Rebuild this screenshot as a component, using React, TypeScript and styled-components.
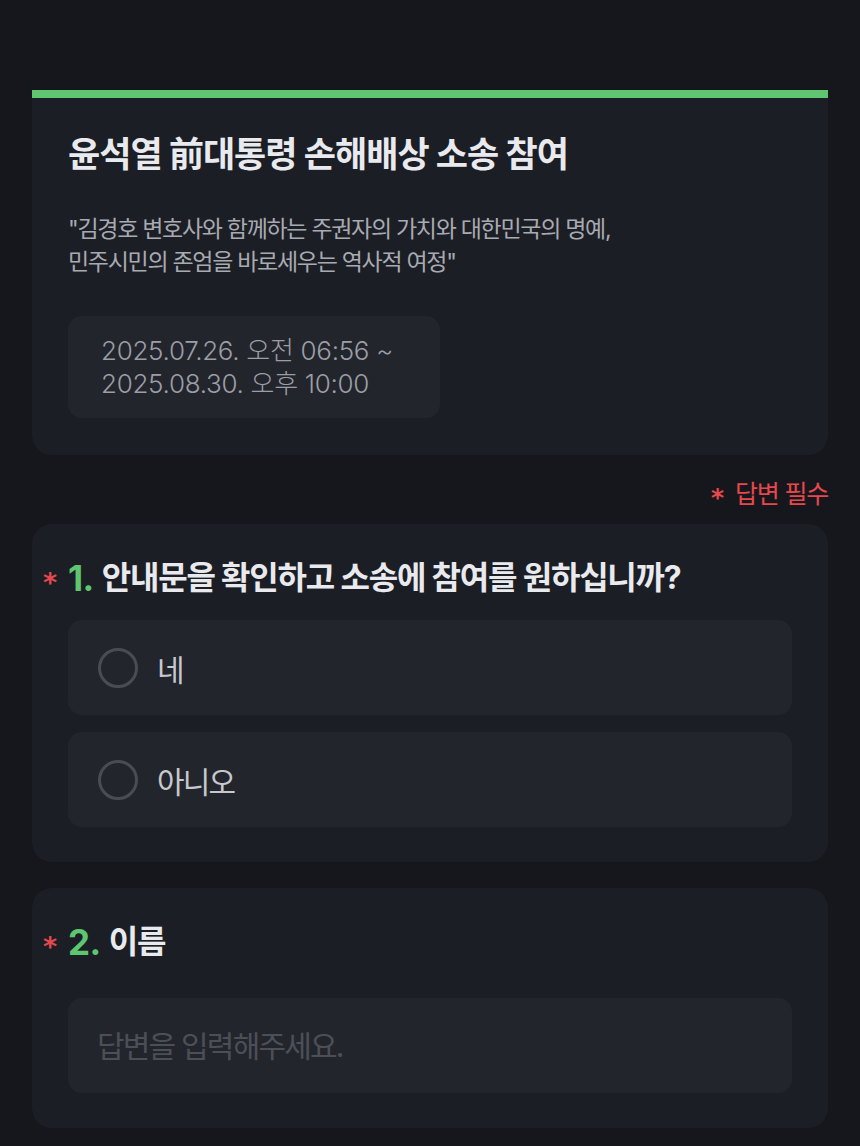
import React from "react";
import styled, { createGlobalStyle } from "styled-components";

const Global = createGlobalStyle`
  html, body { margin: 0; padding: 0; background: #16171c; }
  body { font-family: "Inter", "Noto Sans CJK KR", sans-serif; }
  * { box-sizing: border-box; }
`;

const Page = styled.div`
  min-height: 1146px;
  background: #16171c;
  padding: 90px 32px 40px;
  display: flex;
  flex-direction: column;
`;

const HeaderCard = styled.section`
  background: #1c1e25;
  border-top: 8px solid #5ec671;
  border-radius: 0 0 20px 20px;
  padding: 35px 36px 37px;
  display: flex;
  flex-direction: column;
  align-items: flex-start;
`;

const Title = styled.h1`
  margin: 0;
  font-size: 35px;
  line-height: 42px;
  font-weight: 700;
  letter-spacing: -1px;
  color: #e9eaee;
`;

const Description = styled.p`
  margin: 38px 0 0;
  font-size: 23px;
  line-height: 33px;
  letter-spacing: -1.3px;
  color: #a8aab1;
`;

const DateBox = styled.div`
  margin-top: 37px;
  background: #23252d;
  border-radius: 14px;
  padding: 18px 47px 18px 33px;
  font-size: 26px;
  line-height: 33px;
  font-weight: 300;
  letter-spacing: -0.3px;
  color: #9c9ea5;
`;

const RequiredNote = styled.div`
  margin: 23px 0 14px;
  display: flex;
  justify-content: flex-end;
  align-items: center;
  gap: 11px;
  font-size: 25px;
  line-height: 32px;
  letter-spacing: -1.2px;
  color: #e5484d;
`;

const Star = styled.span<{ $size: number; $drop: number }>`
  color: #e5484d;
  font-family: "DejaVu Sans", sans-serif;
  font-weight: 700;
  font-size: ${(p) => p.$size}px;
  line-height: 1;
  padding-top: ${(p) => p.$drop}px;
  letter-spacing: 0;
`;

const QuestionCard = styled.section<{ $gap: number }>`
  background: #1c1e25;
  border-radius: 20px;
  padding: 34px 36px 35px;
  display: flex;
  flex-direction: column;
  gap: ${(p) => p.$gap}px;
  & + & { margin-top: 26px; }
`;

const QuestionTitle = styled.h2`
  margin: 0 0 0 -25px;
  display: flex;
  align-items: center;
  font-size: 32px;
  line-height: 40px;
  font-weight: 700;
  letter-spacing: -1.2px;
  color: #e9eaee;
`;

const StarSlot = styled.span`
  width: 25px;
  display: flex;
  align-items: center;
`;

const Num = styled.span`
  color: #5ec671;
  font-size: 35px;
  margin-right: 8px;
  letter-spacing: -0.5px;
`;

const Options = styled.div`
  display: flex;
  flex-direction: column;
  gap: 17px;
`;

const Option = styled.label`
  height: 95px;
  background: #23252d;
  border-radius: 14px;
  padding-left: 30px;
  display: flex;
  align-items: center;
  gap: 19px;
  font-size: 30px;
  letter-spacing: -1.8px;
  color: #c6c8cd;
  cursor: pointer;
`;

const Radio = styled.span`
  width: 40px;
  height: 40px;
  border-radius: 50%;
  border: 3.5px solid #4a4c54;
  flex-shrink: 0;
`;

const AnswerInput = styled.input`
  height: 95px;
  width: 100%;
  background: #23252d;
  border: none;
  outline: none;
  border-radius: 14px;
  padding: 0 29px;
  font-family: "Inter", "Noto Sans CJK KR", sans-serif;
  font-size: 30px;
  letter-spacing: -1.8px;
  color: #c6c8cd;
  &::placeholder { color: #4d4f57; }
`;

export default function App() {
  return (
    <>
      <Global />
      <Page>
        <HeaderCard>
          <Title>윤석열 前대통령 손해배상 소송 참여</Title>
          <Description>
            "김경호 변호사와 함께하는 주권자의 가치와 대한민국의 명예,
            <br />
            민주시민의 존엄을 바로세우는 역사적 여정"
          </Description>
          <DateBox>
            2025.07.26. 오전 06:56 ~
            <br />
            2025.08.30. 오후 10:00
          </DateBox>
        </HeaderCard>
        <RequiredNote>
          <Star $size={25} $drop={7}>*</Star>
          <span>답변 필수</span>
        </RequiredNote>
        <QuestionCard $gap={22}>
          <QuestionTitle>
            <StarSlot>
              <Star $size={27} $drop={9}>*</Star>
            </StarSlot>
            <Num>1.</Num>
            안내문을 확인하고 소송에 참여를 원하십니까?
          </QuestionTitle>
          <Options>
            <Option>
              <Radio />네
            </Option>
            <Option>
              <Radio />아니오
            </Option>
          </Options>
        </QuestionCard>
        <QuestionCard $gap={36}>
          <QuestionTitle>
            <StarSlot>
              <Star $size={27} $drop={9}>*</Star>
            </StarSlot>
            <Num>2.</Num>
            이름
          </QuestionTitle>
          <AnswerInput placeholder="답변을 입력해주세요." />
        </QuestionCard>
      </Page>
    </>
  );
}
